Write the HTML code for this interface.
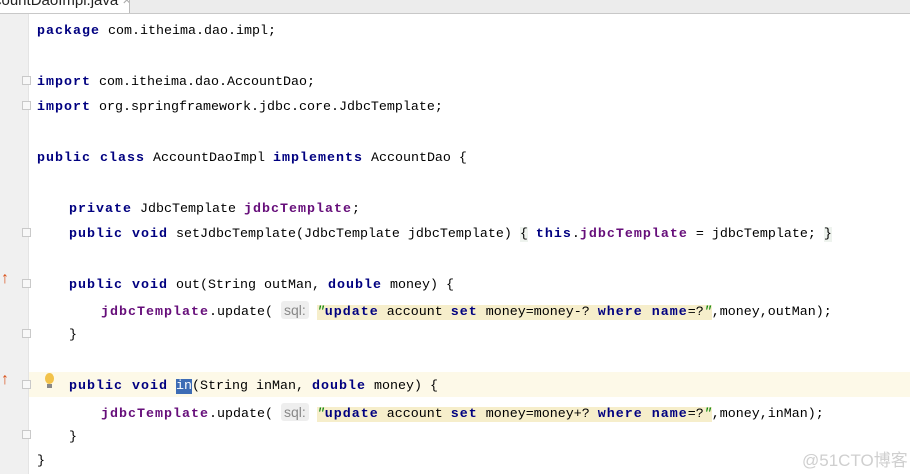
<!DOCTYPE html><html><head><style>
html,body{margin:0;width:910px;height:474px;overflow:hidden}
body{background:#fff;position:relative;font-family:"Liberation Mono",monospace}
.tabbar{position:absolute;left:0;top:0;width:910px;height:13px;background:#ececec;border-bottom:1px solid #c8c8c8}
.tab{position:absolute;left:0;top:-8px;width:129px;height:21px;background:#fff;border-right:1px solid #bbb;font:15px "Liberation Sans",sans-serif;color:#222;line-height:18px;white-space:nowrap;overflow:hidden;text-indent:-6px}
.gut{position:absolute;left:0;top:14px;width:28px;height:460px;background:#f0f0f0;border-right:1px solid #e4e4e4}
.hl{position:absolute;left:29px;top:372px;width:881px;height:25px;background:#fdf9e8}
.l{position:absolute;left:37px;font-size:13.33px;color:#000;white-space:pre;height:25px;line-height:25px}
.k{color:#000080;font-weight:bold;letter-spacing:1px}
.f{color:#660e7a;font-weight:bold;letter-spacing:1px}
.s{background:#f6eecb}
.g{color:#008000;font-style:italic}
.hint{background:#eeeeee;color:#888;font-family:"Liberation Sans",sans-serif;font-size:14px;padding:1px 3px;border-radius:3px}
.sel{background:#3d6cb5;color:#fff}
.fold{position:absolute;left:22px;width:9px;height:9px;border:1px solid #c9c9c9;background:#f8f8f8;box-sizing:border-box}
.arr{position:absolute;left:1px;color:#d9521a;font:bold 16px "Liberation Sans",sans-serif}
.wm{position:absolute;left:802px;top:446px;color:#cfcfcf;font:17px "Liberation Sans","Noto Sans CJK SC",sans-serif;white-space:nowrap}
</style></head><body>
<div class="tabbar"><div class="tab">countDaoImpl.java <span style="color:#aaa">×</span></div></div>
<div class="gut"></div>
<div class="hl"></div>
<div class="fold" style="top:76px"></div><div class="fold" style="top:101px"></div>
<div class="fold" style="top:228px"></div>
<div class="fold" style="top:279px"></div><div class="fold" style="top:329px"></div>
<div class="fold" style="top:380px"></div><div class="fold" style="top:430px"></div>
<div class="arr" style="top:270px">↑</div><div class="arr" style="top:371px">↑</div>
<div style="position:absolute;left:45px;top:373px;width:9px;height:11px;border-radius:50%;background:#f2c24a"></div>
<div style="position:absolute;left:47px;top:384px;width:5px;height:4px;background:#888"></div>
<div class="l" style="top:19px"><span class="k">package</span> com.itheima.dao.impl;</div>
<div class="l" style="top:70px"><span class="k">import</span> com.itheima.dao.AccountDao;</div>
<div class="l" style="top:95px"><span class="k">import</span> org.springframework.jdbc.core.JdbcTemplate;</div>
<div class="l" style="top:146px"><span class="k">public class</span> AccountDaoImpl <span class="k">implements</span> AccountDao {</div>
<div class="l" style="top:197px">    <span class="k">private</span> JdbcTemplate <span class="f">jdbcTemplate</span>;</div>
<div class="l" style="top:222px">    <span class="k">public void</span> setJdbcTemplate(JdbcTemplate jdbcTemplate) <span style="background:#eef3ee">{</span> <span class="k">this</span>.<span class="f">jdbcTemplate</span> = jdbcTemplate; <span style="background:#eef3ee">}</span></div>
<div class="l" style="top:273px">    <span class="k">public void</span> out(String outMan, <span class="k">double</span> money) {</div>
<div class="l" style="top:298px">        <span class="f">jdbcTemplate</span>.update( <span class="hint">sql:</span> <span class="s"><span class="g">"</span><span class="k">update</span> account <span class="k">set</span> money=money-? <span class="k">where name</span>=?<span class="g">"</span></span>,money,outMan);</div>
<div class="l" style="top:323px">    }</div>
<div class="l" style="top:374px">    <span class="k">public void</span> <span class="sel">in</span>(String inMan, <span class="k">double</span> money) {</div>
<div class="l" style="top:400px">        <span class="f">jdbcTemplate</span>.update( <span class="hint">sql:</span> <span class="s"><span class="g">"</span><span class="k">update</span> account <span class="k">set</span> money=money+? <span class="k">where name</span>=?<span class="g">"</span></span>,money,inMan);</div>
<div class="l" style="top:425px">    }</div>
<div class="l" style="top:449px">}</div>
<div class="wm">@51CTO博客</div>
</body></html>
